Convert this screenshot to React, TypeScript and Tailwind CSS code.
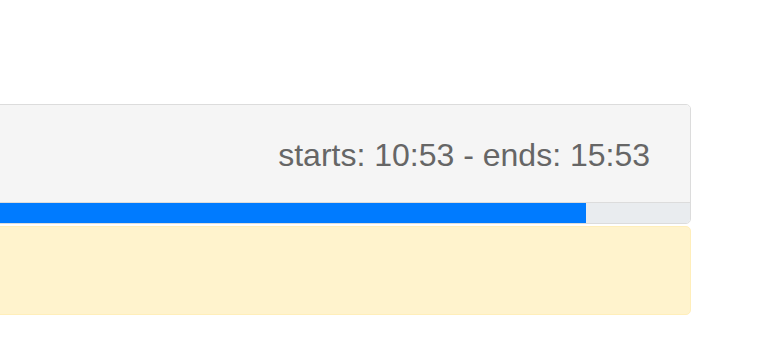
export default function App() {
  return (
    <div className="w-[784px] h-[360px] bg-white overflow-hidden pt-[104px]" style={{ fontFamily: '"Liberation Sans", Arial, sans-serif' }}>
      <div className="ml-[-30px] w-[721px]">
        <div className="border border-[#dcdcdc] rounded-[5px] overflow-hidden">
          <div className="h-[98px] bg-[#f5f5f5] border-b border-[#dcdcdc] flex items-center justify-end pr-[40px]">
            <span className="text-[32px] leading-none text-[#666666] mt-[2px]">starts: 10:53 - ends: 15:53</span>
          </div>
          <div className="h-[20px] bg-[#e9ecef] flex">
            <div className="h-full w-[615px] bg-[#007bff]" />
          </div>
        </div>
        <div className="mt-[2px] h-[89px] bg-[#fff3cd] border border-[#ffeeba] rounded-[5px]" />
      </div>
    </div>
  );
}
